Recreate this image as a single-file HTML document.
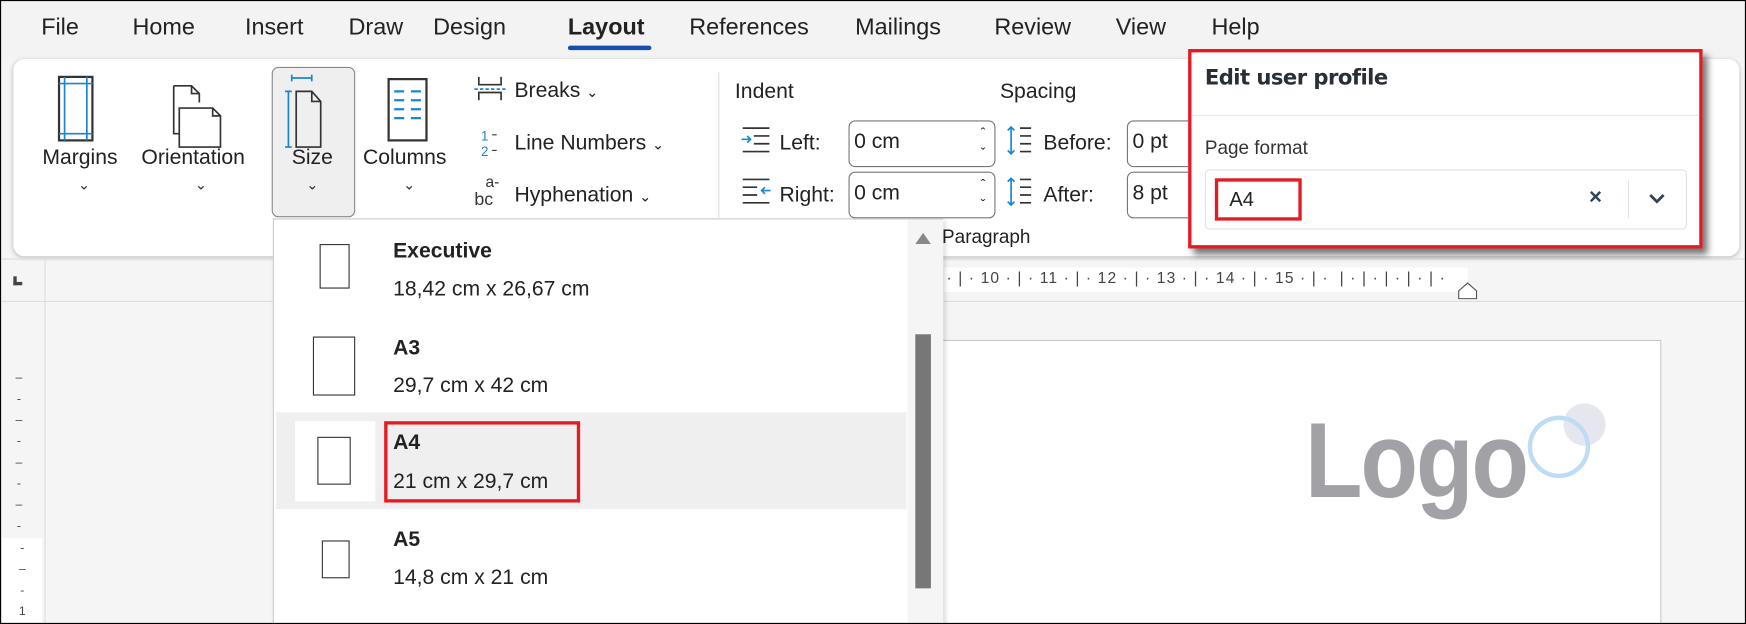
<!DOCTYPE html>
<html><head><meta charset="utf-8"><style>
*{margin:0;padding:0;box-sizing:border-box}
html,body{width:1746px;height:624px;overflow:hidden;background:#f5f5f5}
#w{position:absolute;left:0;top:0;width:1568px;height:560px;transform:scale(1.11352,1.11429);transform-origin:0 0;font-family:"Liberation Sans",sans-serif;color:#222;background:#f5f5f5;overflow:hidden}
.a{position:absolute;white-space:nowrap}
.t{position:absolute;font-size:21px;color:#222;top:13px}
.lbl{position:absolute;font-size:19px;color:#222;white-space:nowrap}
.chev{position:absolute;font-size:13px;color:#333}
.inp{position:absolute;border:1.5px solid #777;border-radius:6px;background:#fff;font-size:19px;padding:8px 0 0 4px}
.item b{position:absolute;left:108px;font-size:19px;white-space:nowrap}
.item span{position:absolute;left:108px;font-size:19px;white-space:nowrap}
</style></head><body><div id="w">
<div class="a" style="left:0;top:0;width:1568px;height:52px;background:#f3f3f3"></div>
<div class="t" style="left:37px">File</div>
<div class="t" style="left:119px">Home</div>
<div class="t" style="left:220px">Insert</div>
<div class="t" style="left:313px">Draw</div>
<div class="t" style="left:389px">Design</div>
<div class="t" style="left:510px;font-weight:bold">Layout</div>
<div class="a" style="left:510px;top:41px;width:75px;height:4px;background:#1450b0;border-radius:2px"></div>
<div class="t" style="left:619px">References</div>
<div class="t" style="left:768px">Mailings</div>
<div class="t" style="left:893px">Review</div>
<div class="t" style="left:1002px">View</div>
<div class="t" style="left:1088px">Help</div>
<div class="a" style="left:12px;top:53px;width:1550px;height:177px;background:#fff;border-radius:10px;box-shadow:0 1px 4px rgba(0,0,0,.25)"></div>
<svg class="a" style="left:40px;top:64px" width="60" height="70"><rect x="13" y="5" width="30" height="57" fill="none" stroke="#333" stroke-width="2"/><path d="M18 5V62M38 5V62M13 11H43M13 56H43" stroke="#1a86d0" stroke-width="1.5"/></svg>
<div class="lbl" style="left:38px;top:131px">Margins</div><div class="chev" style="left:70px;top:158px">&#8964;</div>
<svg class="a" style="left:150px;top:64px" width="70" height="70"><path d="M6 13V56H11M6 13H22L29 20V28M22 13V20H29" fill="none" stroke="#333" stroke-width="1.5"/><path d="M11 33H41L48 40V68H11Z M41 33V40H48" fill="none" stroke="#333" stroke-width="1.5"/></svg>
<div class="lbl" style="left:127px;top:131px">Orientation</div><div class="chev" style="left:175px;top:158px">&#8964;</div>
<div class="a" style="left:244px;top:60px;width:75px;height:135px;background:#efefef;border:1.5px solid #888;border-radius:6px"></div>
<svg class="a" style="left:250px;top:64px" width="60" height="70"><path d="M12 6H30M12 3V9M30 3V9" stroke="#1a86d0" stroke-width="1.5"/><path d="M9 18V68M6 18H12M6 68H12" stroke="#1a86d0" stroke-width="1.5"/><path d="M16 18H30L38 27V68H16Z M30 18V27H38" fill="none" stroke="#333" stroke-width="1.5"/></svg>
<div class="lbl" style="left:262px;top:131px">Size</div><div class="chev" style="left:275px;top:158px">&#8964;</div>
<svg class="a" style="left:340px;top:64px" width="60" height="70"><rect x="9" y="7" width="34" height="55" fill="none" stroke="#333" stroke-width="2"/><path d="M14 18H23M29 18H38M14 26H23M29 26H38M14 34H23M29 34H38M14 42H23M29 42H38" stroke="#1a86d0" stroke-width="2"/></svg>
<div class="lbl" style="left:326px;top:131px">Columns</div><div class="chev" style="left:362px;top:158px">&#8964;</div>
<svg class="a" style="left:424px;top:68px" width="32" height="120"><path d="M6 1V8H26V1M6 22V15H26V22" fill="none" stroke="#333" stroke-width="1.5"/><path d="M2 12H30" stroke="#1a86d0" stroke-width="1.5" stroke-dasharray="3 2"/><text x="8" y="58" font-size="12" fill="#1a86d0" font-family="Liberation Sans">1</text><text x="8" y="72" font-size="12" fill="#1a86d0" font-family="Liberation Sans">2</text><path d="M18 53H22M18 67H22" stroke="#333"/><text x="12" y="100" font-size="14" fill="#333" font-family="Liberation Sans">a-</text><text x="2" y="116" font-size="16" fill="#333" font-family="Liberation Sans">bc</text></svg>
<div class="lbl" style="left:462px;top:71px">Breaks <span style="font-size:13px">&#8964;</span></div>
<div class="lbl" style="left:462px;top:118px">Line Numbers <span style="font-size:13px">&#8964;</span></div>
<div class="lbl" style="left:462px;top:165px">Hyphenation <span style="font-size:13px">&#8964;</span></div>
<div class="a" style="left:645px;top:65px;width:1px;height:130px;background:#ddd"></div>
<div class="lbl" style="left:660px;top:72px">Indent</div>
<div class="lbl" style="left:898px;top:72px">Spacing</div>
<svg class="a" style="left:664px;top:112px" width="30" height="80"><path d="M3 3H27M13 10H27M13 17H27M3 24H27" stroke="#333" stroke-width="1.5"/><path d="M2 13H10M7 10L10 13L7 16" stroke="#1a86d0" stroke-width="1.5" fill="none"/><path d="M3 49H27M3 56H16M3 63H16M3 70H27" stroke="#333" stroke-width="1.5"/><path d="M28 59H20M23 56L20 59L23 62" stroke="#1a86d0" stroke-width="1.5" fill="none"/></svg>
<div class="lbl" style="left:700px;top:118px">Left:</div>
<div class="lbl" style="left:700px;top:165px">Right:</div>
<div class="inp" style="left:762px;top:108px;width:132px;height:42px">0 cm<span style="position:absolute;right:8px;top:2px;font-size:13px;line-height:18px">&#710;<br>&#711;</span></div>
<div class="inp" style="left:762px;top:154px;width:132px;height:42px">0 cm<span style="position:absolute;right:8px;top:2px;font-size:13px;line-height:18px">&#710;<br>&#711;</span></div>
<svg class="a" style="left:900px;top:112px" width="36" height="80"><path d="M8 2V26M5 5L8 2L11 5M5 23L8 26L11 23" stroke="#1a86d0" stroke-width="1.5" fill="none"/><path d="M16 3H26M16 10H26M16 17H26M16 24H26" stroke="#333" stroke-width="1.5"/><path d="M8 48V72M5 51L8 48L11 51M5 69L8 72L11 69" stroke="#1a86d0" stroke-width="1.5" fill="none"/><path d="M16 49H26M16 56H26M16 63H26M16 70H26" stroke="#333" stroke-width="1.5"/></svg>
<div class="lbl" style="left:937px;top:118px">Before:</div>
<div class="lbl" style="left:937px;top:165px">After:</div>
<div class="inp" style="left:1012px;top:108px;width:80px;height:42px">0 pt</div>
<div class="inp" style="left:1012px;top:154px;width:80px;height:42px">8 pt</div>
<div class="lbl" style="left:846px;top:203px;font-size:17px">Paragraph</div>
<div class="a" style="left:0;top:232px;width:1568px;height:1px;background:#ddd"></div>
<div class="a" style="left:40px;top:232px;width:1px;height:328px;background:#ddd"></div>
<div class="a" style="left:12px;top:248px;width:8px;height:8px;border-left:3px solid #444;border-bottom:3px solid #444"></div>
<div class="a" style="left:848px;top:240px;width:470px;height:22px;background:#fff"></div>
<div class="a" style="left:850px;top:241px;font-size:14px;color:#444;letter-spacing:1px;white-space:nowrap">· | · 10 · | · 11 · | · 12 · | · 13 · | · 14 · | · 15 · | · &nbsp;| · | · | · | · | ·</div>
<svg class="a" style="left:1308px;top:252px" width="20" height="18"><path d="M2 16V9L10 2L18 9V16Z" fill="#fff" stroke="#555"/></svg>
<div class="a" style="left:0;top:270px;width:1568px;height:1px;background:#ddd"></div>
<div class="a" style="left:2px;top:330px;width:30px;height:200px;font-size:11px;color:#444;line-height:19px;text-align:center">–<br>-<br>–<br>-<br>–<br>-<br>–<br>-</div>
<div class="a" style="left:2px;top:483px;width:36px;height:77px;background:#fff;font-size:11px;color:#444;line-height:19px;text-align:center">-<br>–<br>-<br>1</div>
<div class="a" style="left:846px;top:305px;width:646px;height:260px;background:#fff;border:1px solid #c8c8c8"></div>
<div class="a" style="left:1172px;top:366px;font-size:96px;line-height:96px;font-weight:bold;color:#a2a2a6;letter-spacing:-2px;transform:scaleX(0.88);transform-origin:0 0">Logo</div>
<svg class="a" style="left:1360px;top:355px" width="100" height="90"><circle cx="63" cy="26" r="19" fill="#e6e7ee"/><circle cx="40" cy="46" r="26" fill="none" stroke="#bfdcf5" stroke-width="4"/></svg>
<div class="a" style="left:245px;top:196px;width:602px;height:364px;background:#fff;border-left:1px solid #ccc;border-top:1px solid #ccc;box-shadow:2px 2px 4px rgba(0,0,0,.15)"></div>
<div class="a" style="left:815px;top:197px;width:32px;height:363px;background:#f5f5f5"></div>
<div class="a" style="left:822px;top:300px;width:14px;height:228px;background:#777"></div>
<svg class="a" style="left:820px;top:207px" width="18" height="14"><path d="M9 2L16 12H2Z" fill="#888"/></svg>
<div class="a" style="left:248px;top:370px;width:566px;height:87px;background:#efefef"></div>
<div class="a" style="left:265px;top:378px;width:72px;height:72px;background:#fff"></div>
<div class="a item" style="left:245px;top:205px"><div class="a" style="left:42px;top:14px;width:27px;height:40px;border:1.5px solid #333"></div><b style="top:10px">Executive</b><span style="top:44px">18,42 cm x 26,67 cm</span></div>
<div class="a item" style="left:245px;top:290px"><div class="a" style="left:36px;top:12px;width:38px;height:53px;border:1.5px solid #333"></div><b style="top:12px">A3</b><span style="top:46px">29,7 cm x 42 cm</span></div>
<div class="a item" style="left:245px;top:370px"><div class="a" style="left:40px;top:22px;width:30px;height:43px;border:1.5px solid #333"></div><b style="top:17px">A4</b><span style="top:52px">21 cm x 29,7 cm</span></div>
<div class="a" style="left:345px;top:378px;width:176px;height:73px;border:3px solid #e31b23"></div>
<div class="a item" style="left:245px;top:457px"><div class="a" style="left:44px;top:28px;width:25px;height:34px;border:1.5px solid #333"></div><b style="top:17px">A5</b><span style="top:51px">14,8 cm x 21 cm</span></div>
<div class="a" style="left:1067px;top:44px;width:462px;height:179px;background:#fff;border:3px solid #e31b23;box-shadow:5px 6px 6px rgba(0,0,0,.55)"></div>
<div class="a" style="left:1082px;top:59px;font-size:19px;font-weight:bold;color:#2a2f35;font-family:'DejaVu Sans',sans-serif;letter-spacing:-0.5px">Edit user profile</div>
<div class="a" style="left:1070px;top:103px;width:456px;height:1px;background:#e6ebf0"></div>
<div class="a" style="left:1082px;top:123px;font-size:17px;color:#333">Page format</div>
<div class="a" style="left:1082px;top:152px;width:433px;height:54px;border:1px solid #dde3ea;border-radius:4px"></div>
<div class="a" style="left:1091px;top:160px;width:78px;height:38px;border:3px solid #e31b23"></div>
<div class="a" style="left:1104px;top:169px;font-size:18px;color:#222">A4</div>
<div class="a" style="left:1427px;top:166px;font-size:20px;font-weight:bold;color:#2f4458">×</div>
<div class="a" style="left:1462px;top:162px;width:1px;height:34px;background:#dde3ea"></div>
<svg class="a" style="left:1480px;top:172px" width="16" height="12"><path d="M2 3L8 9L14 3" fill="none" stroke="#2f4458" stroke-width="2.5"/></svg>
<div class="a" style="left:0;top:0;width:1568px;height:560px;border:1px solid #000"></div>
</div></body></html>
